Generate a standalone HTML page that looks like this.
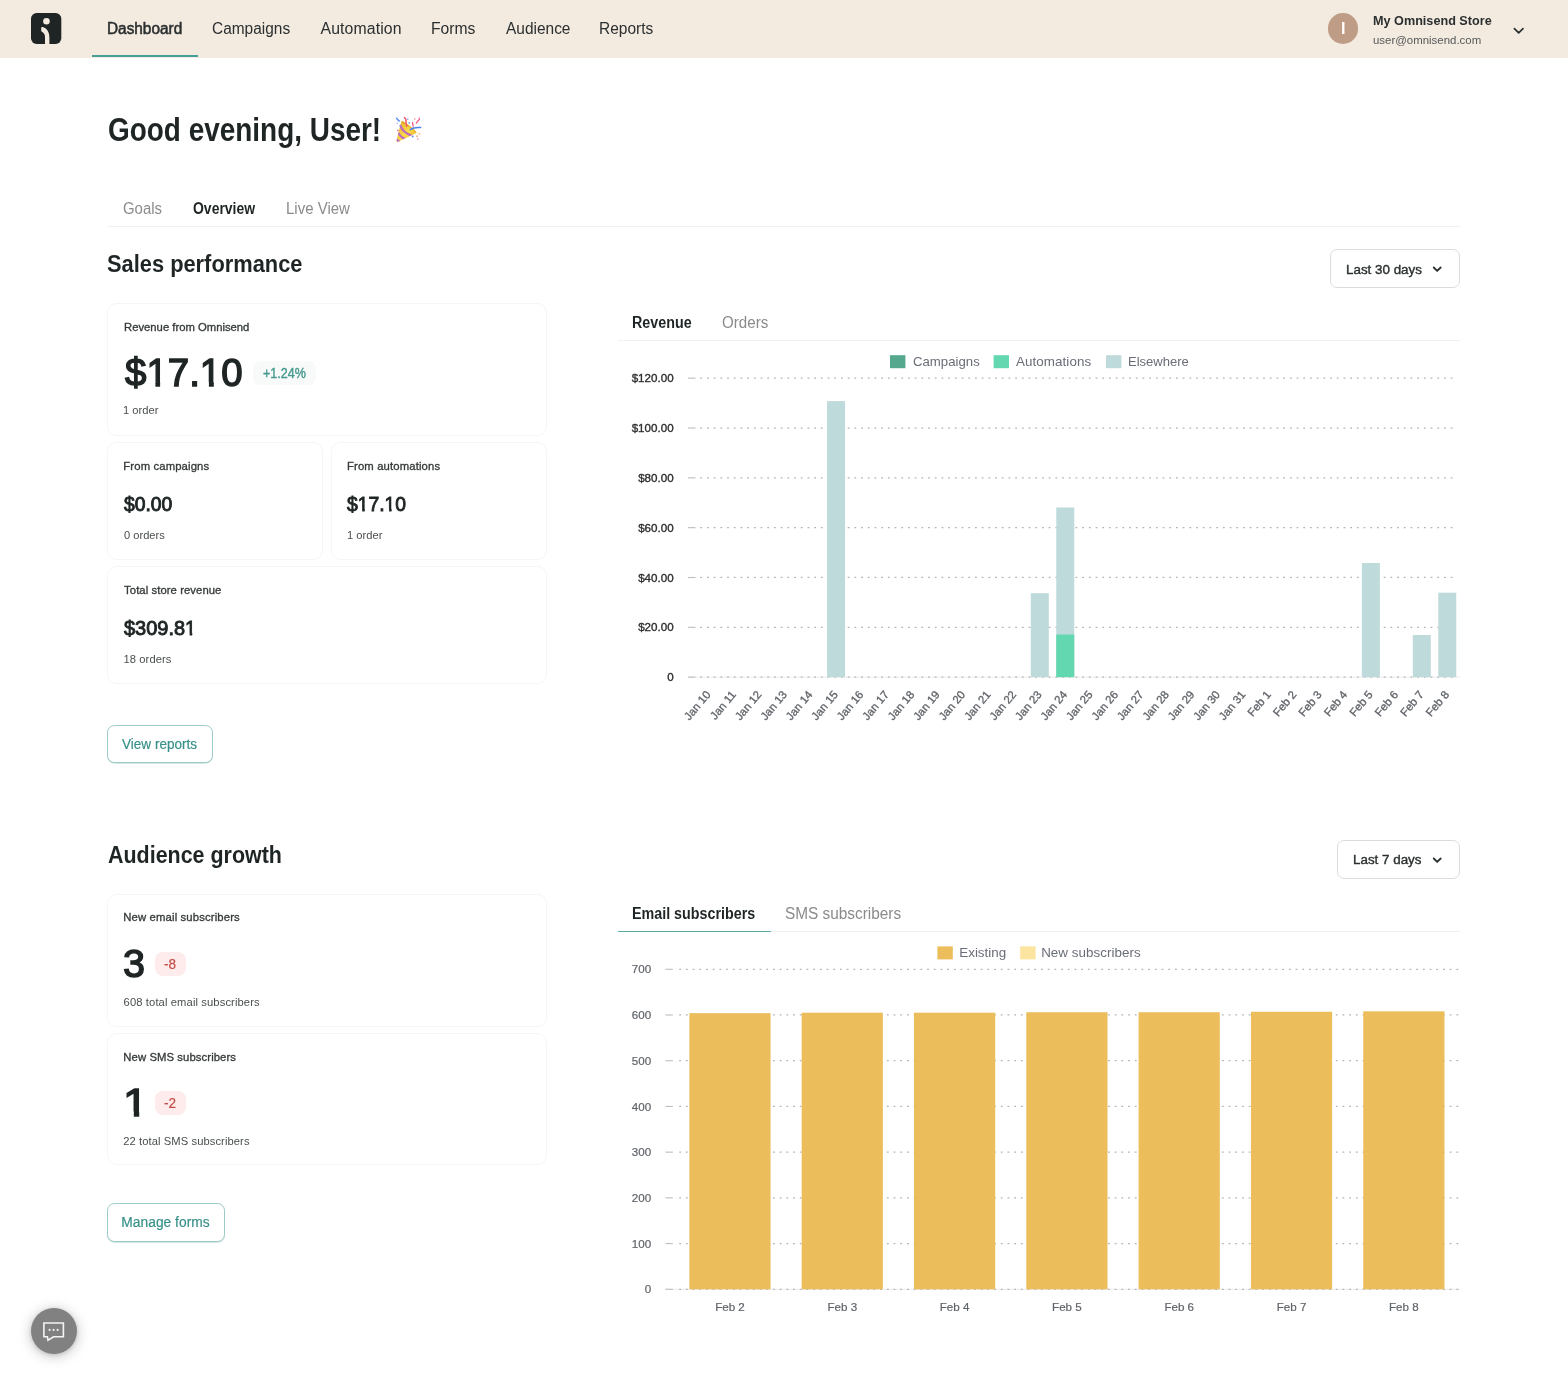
<!DOCTYPE html>
<html lang="en"><head><meta charset="utf-8"><title>Dashboard - Omnisend</title>
<style>
html,body{margin:0;padding:0;background:#fff;}
body{width:1568px;height:1377px;position:relative;overflow:hidden;font-family:"Liberation Sans",sans-serif;}
#app{position:absolute;left:0;top:0;width:1568px;height:1377px;will-change:transform;}
.abs{position:absolute;}
.t{position:absolute;white-space:nowrap;font-family:"Liberation Sans",sans-serif;transform-origin:0 50%;}
svg text{font-family:"Liberation Sans",sans-serif;}
.nav{position:absolute;left:0;top:0;width:1568px;height:57.5px;background:#f3eae0;}
.card{position:absolute;box-sizing:border-box;border:1.6px solid #f5f5f5;border-radius:9.5px;background:#fff;}
.btn{position:absolute;box-sizing:border-box;border:1.3px solid #9ccbc7;border-radius:7.5px;background:#fff;box-shadow:0 .8px 0 rgba(60,140,135,.28);}
.dd{position:absolute;box-sizing:border-box;border:1px solid #dcdcdc;border-radius:7px;background:#fff;}
.o{display:inline-block;clip-path:polygon(0 0,.362em 0,.362em 100%,.236em 100%,.236em .742em,0 .742em);}
.hr{position:absolute;height:1px;background:#f0f0f0;}
.badge{position:absolute;border-radius:8px;}
</style></head><body><div id="app">
<div class="nav"></div>
<div class="abs" style="left:92px;top:55.3px;width:105.6px;height:2.2px;background:#469f99;"></div>
<svg class="abs" style="left:30.9px;top:13.4px" width="31" height="32" viewBox="0 0 31 32">
<rect x="0" y="0" width="30.3" height="30.9" rx="5.6" ry="5.6" fill="#1f2525"/>
<circle cx="15.45" cy="8.25" r="3.3" fill="#f3eae0"/>
<path d="M10.2 14.7 C10.2 14.0 10.8 13.8 11.5 14.0 C15.7 15.3 18.4 18.6 18.4 24.5 L18.4 31 L14.0 31 L14.0 24.5 C14.0 21.6 13.1 20.1 11.3 19.0 C10.5 18.5 10.2 18.1 10.2 17.2 Z" fill="#f3eae0"/>
</svg>
<div class="abs" style="left:1327.5px;top:13.4px;width:30.9px;height:30.9px;border-radius:50%;background:#bf9c85;"></div>
<svg class="abs" style="left:1510px;top:24px" width="18" height="14" viewBox="0 0 18 14"><path d="M4.4 4.6 L8.7 8.9 L13 4.6" fill="none" stroke="#2a2f2f" stroke-width="1.7" stroke-linecap="round" stroke-linejoin="round"/></svg>
<svg class="abs" style="left:388px;top:110px" width="40" height="40" viewBox="0 0 40 40">
<defs><linearGradient id="cg" x1="0" y1="0" x2="1" y2="1"><stop offset="0" stop-color="#e3a92c"/><stop offset=".55" stop-color="#fbdc45"/><stop offset="1" stop-color="#e8a625"/></linearGradient>
<clipPath id="cc"><path d="M8.6 31.6 C8.2 30.8 11.6 17.6 13.2 12.2 C13.5 11.2 14.4 11 15.4 11.6 C20 14.4 25.4 18.6 27.8 21.6 C28.4 22.4 28.2 23 27.4 23.4 C22 26 10.4 31.6 9.6 31.9 C9.1 32.1 8.8 32 8.6 31.6 Z"/></clipPath></defs>
<path d="M8.6 31.6 C8.2 30.8 11.6 17.6 13.2 12.2 C13.5 11.2 14.4 11 15.4 11.6 C20 14.4 25.4 18.6 27.8 21.6 C28.4 22.4 28.2 23 27.4 23.4 C22 26 10.4 31.6 9.6 31.9 C9.1 32.1 8.8 32 8.6 31.6 Z" fill="url(#cg)"/>
<g clip-path="url(#cc)" fill="none" stroke="#b862cf" stroke-width="2.3" opacity=".92">
<path d="M12 14.5 C13.5 19.5 17.5 23.5 23.5 25.5"/>
<path d="M10 22.5 C11.5 25.5 14 27.8 17.5 29"/>
<path d="M8 28.5 C9 30.2 10.4 31.2 12 31.8"/>
</g>
<path d="M13.6 11.8 C17 12.6 25.6 19 27.6 22.4" fill="none" stroke="#d99a22" stroke-width="1.2" opacity=".7"/>
<path d="M22.3 19.6 C24.6 17.8 28.6 17.2 32.6 17.5" fill="none" stroke="#4b83f3" stroke-width="1.5" stroke-linecap="round"/>
<path d="M16.4 7.6 C18.2 8.4 18.2 10.2 18 12 C17.9 13.6 18.4 15 18.8 16.2" fill="none" stroke="#f05a6e" stroke-width="1.5" stroke-linecap="round"/>
<path d="M24.6 12.6 C24 13.8 25.4 14.8 25.2 16.2" fill="none" stroke="#f45d8d" stroke-width="1.4" stroke-linecap="round"/>
<path d="M31.4 8.2 C32 9.6 30.2 10.2 29.6 11.4 C29.2 12.2 28.8 12.6 28.4 13.2" fill="none" stroke="#f2688f" stroke-width="1.4" stroke-linecap="round"/>
<path d="M8.8 8.4 C9 9.6 10.4 9.8 11.2 11" fill="none" stroke="#5b8df5" stroke-width="1.6" stroke-linecap="round"/>
<circle cx="26.8" cy="9" r=".8" fill="#f27a9c"/>
<circle cx="21.2" cy="12.8" r=".9" fill="#6c9cf7"/><circle cx="19.8" cy="9.2" r=".7" fill="#6c9cf7"/>
<circle cx="9.2" cy="13.2" r=".8" fill="#9db9fa"/><circle cx="11.8" cy="16" r=".7" fill="#7d97e8"/>
<circle cx="9.9" cy="20.3" r=".9" fill="#f0708d"/>
<circle cx="24.7" cy="26.5" r=".95" fill="#5b8df5"/>
<circle cx="31.4" cy="23.8" r=".9" fill="#f6b07a"/><circle cx="29.1" cy="26.2" r=".9" fill="#f4a66a"/>
<circle cx="29.9" cy="29.1" r=".85" fill="#f59ac0"/>
<circle cx="13" cy="11" r=".6" fill="#f8e25c"/><circle cx="29" cy="22.4" r=".6" fill="#f8e25c"/>
</svg>
<div class="hr" style="left:107.5px;top:226px;width:1352.5px;"></div>
<div class="card" style="left:107.1px;top:303.2px;width:440px;height:132.7px;"></div>
<div class="card" style="left:107.1px;top:442.2px;width:216px;height:117.4px;"></div>
<div class="card" style="left:331.1px;top:442.2px;width:216px;height:117.4px;"></div>
<div class="card" style="left:107.1px;top:566.2px;width:440px;height:117.4px;"></div>
<div class="badge" style="left:252.8px;top:361.3px;width:63px;height:23.5px;background:#f8f9f9;"></div>
<div class="btn" style="left:107.2px;top:724.7px;width:105.9px;height:38.6px;"></div>
<div class="dd" style="left:1329.8px;top:249.3px;width:130.6px;height:38.3px;"></div>
<svg class="abs" style="left:1430px;top:263px" width="14" height="12" viewBox="0 0 14 12"><path d="M3.75 4.5 L7.2 7.95 L10.65 4.5" fill="none" stroke="#2a2f2f" stroke-width="1.8" stroke-linecap="round" stroke-linejoin="round"/></svg>
<div class="hr" style="left:617.5px;top:340px;width:842.5px;"></div>
<svg class="abs" style="left:0;top:340px" width="1568" height="440" viewBox="0 340 1568 440">
<line x1="688" x2="1460.0" y1="677.15" y2="677.15" stroke="#ececec" stroke-width="1"/>
<line x1="688" x2="695.5" y1="677.15" y2="677.15" stroke="#bdbdbd" stroke-width="1.1"/>
<line x1="700.3" x2="1456.6" y1="677.15" y2="677.15" stroke="#b4b4b4" stroke-width="1.25" stroke-dasharray="1.8 4.9"/>
<text x="673.6" y="681.25" text-anchor="end" font-size="11.6" fill="#2e2e2e" stroke="#2e2e2e" stroke-width="0.35">0</text>
<line x1="688" x2="695.5" y1="627.32" y2="627.32" stroke="#bdbdbd" stroke-width="1.1"/>
<line x1="700.3" x2="1456.6" y1="627.32" y2="627.32" stroke="#b4b4b4" stroke-width="1.25" stroke-dasharray="1.8 4.9"/>
<text x="673.6" y="631.42" text-anchor="end" font-size="11.6" fill="#2e2e2e" stroke="#2e2e2e" stroke-width="0.35">$20.00</text>
<line x1="688" x2="695.5" y1="577.49" y2="577.49" stroke="#bdbdbd" stroke-width="1.1"/>
<line x1="700.3" x2="1456.6" y1="577.49" y2="577.49" stroke="#b4b4b4" stroke-width="1.25" stroke-dasharray="1.8 4.9"/>
<text x="673.6" y="581.59" text-anchor="end" font-size="11.6" fill="#2e2e2e" stroke="#2e2e2e" stroke-width="0.35">$40.00</text>
<line x1="688" x2="695.5" y1="527.66" y2="527.66" stroke="#bdbdbd" stroke-width="1.1"/>
<line x1="700.3" x2="1456.6" y1="527.66" y2="527.66" stroke="#b4b4b4" stroke-width="1.25" stroke-dasharray="1.8 4.9"/>
<text x="673.6" y="531.76" text-anchor="end" font-size="11.6" fill="#2e2e2e" stroke="#2e2e2e" stroke-width="0.35">$60.00</text>
<line x1="688" x2="695.5" y1="477.83" y2="477.83" stroke="#bdbdbd" stroke-width="1.1"/>
<line x1="700.3" x2="1456.6" y1="477.83" y2="477.83" stroke="#b4b4b4" stroke-width="1.25" stroke-dasharray="1.8 4.9"/>
<text x="673.6" y="481.93" text-anchor="end" font-size="11.6" fill="#2e2e2e" stroke="#2e2e2e" stroke-width="0.35">$80.00</text>
<line x1="688" x2="695.5" y1="428.00" y2="428.00" stroke="#bdbdbd" stroke-width="1.1"/>
<line x1="700.3" x2="1456.6" y1="428.00" y2="428.00" stroke="#b4b4b4" stroke-width="1.25" stroke-dasharray="1.8 4.9"/>
<text x="673.6" y="432.10" text-anchor="end" font-size="11.6" fill="#2e2e2e" stroke="#2e2e2e" stroke-width="0.35">$100.00</text>
<line x1="688" x2="695.5" y1="378.17" y2="378.17" stroke="#bdbdbd" stroke-width="1.1"/>
<line x1="700.3" x2="1456.6" y1="378.17" y2="378.17" stroke="#b4b4b4" stroke-width="1.25" stroke-dasharray="1.8 4.9"/>
<text x="673.6" y="382.27" text-anchor="end" font-size="11.6" fill="#2e2e2e" stroke="#2e2e2e" stroke-width="0.35">$120.00</text>
<rect x="827.07" y="401.09" width="18.0" height="276.06" fill="#bfdada"/>
<rect x="1030.80" y="593.19" width="18.0" height="83.96" fill="#bfdada"/>
<rect x="1056.27" y="507.48" width="18.0" height="169.67" fill="#bfdada"/>
<rect x="1056.27" y="634.55" width="18.0" height="42.60" fill="#62d7b0"/>
<rect x="1361.87" y="563.04" width="18.0" height="114.11" fill="#bfdada"/>
<rect x="1412.80" y="635.04" width="18.0" height="42.11" fill="#bfdada"/>
<rect x="1438.27" y="592.69" width="18.0" height="84.46" fill="#bfdada"/>
<text transform="translate(711.23 694.85) rotate(-50)" text-anchor="end" font-size="11.4" fill="#5f6368" stroke="#5f6368" stroke-width="0.3">Jan 10</text>
<text transform="translate(736.70 694.85) rotate(-50)" text-anchor="end" font-size="11.4" fill="#5f6368" stroke="#5f6368" stroke-width="0.3">Jan 11</text>
<text transform="translate(762.17 694.85) rotate(-50)" text-anchor="end" font-size="11.4" fill="#5f6368" stroke="#5f6368" stroke-width="0.3">Jan 12</text>
<text transform="translate(787.63 694.85) rotate(-50)" text-anchor="end" font-size="11.4" fill="#5f6368" stroke="#5f6368" stroke-width="0.3">Jan 13</text>
<text transform="translate(813.10 694.85) rotate(-50)" text-anchor="end" font-size="11.4" fill="#5f6368" stroke="#5f6368" stroke-width="0.3">Jan 14</text>
<text transform="translate(838.57 694.85) rotate(-50)" text-anchor="end" font-size="11.4" fill="#5f6368" stroke="#5f6368" stroke-width="0.3">Jan 15</text>
<text transform="translate(864.03 694.85) rotate(-50)" text-anchor="end" font-size="11.4" fill="#5f6368" stroke="#5f6368" stroke-width="0.3">Jan 16</text>
<text transform="translate(889.50 694.85) rotate(-50)" text-anchor="end" font-size="11.4" fill="#5f6368" stroke="#5f6368" stroke-width="0.3">Jan 17</text>
<text transform="translate(914.97 694.85) rotate(-50)" text-anchor="end" font-size="11.4" fill="#5f6368" stroke="#5f6368" stroke-width="0.3">Jan 18</text>
<text transform="translate(940.43 694.85) rotate(-50)" text-anchor="end" font-size="11.4" fill="#5f6368" stroke="#5f6368" stroke-width="0.3">Jan 19</text>
<text transform="translate(965.90 694.85) rotate(-50)" text-anchor="end" font-size="11.4" fill="#5f6368" stroke="#5f6368" stroke-width="0.3">Jan 20</text>
<text transform="translate(991.37 694.85) rotate(-50)" text-anchor="end" font-size="11.4" fill="#5f6368" stroke="#5f6368" stroke-width="0.3">Jan 21</text>
<text transform="translate(1016.83 694.85) rotate(-50)" text-anchor="end" font-size="11.4" fill="#5f6368" stroke="#5f6368" stroke-width="0.3">Jan 22</text>
<text transform="translate(1042.30 694.85) rotate(-50)" text-anchor="end" font-size="11.4" fill="#5f6368" stroke="#5f6368" stroke-width="0.3">Jan 23</text>
<text transform="translate(1067.77 694.85) rotate(-50)" text-anchor="end" font-size="11.4" fill="#5f6368" stroke="#5f6368" stroke-width="0.3">Jan 24</text>
<text transform="translate(1093.23 694.85) rotate(-50)" text-anchor="end" font-size="11.4" fill="#5f6368" stroke="#5f6368" stroke-width="0.3">Jan 25</text>
<text transform="translate(1118.70 694.85) rotate(-50)" text-anchor="end" font-size="11.4" fill="#5f6368" stroke="#5f6368" stroke-width="0.3">Jan 26</text>
<text transform="translate(1144.17 694.85) rotate(-50)" text-anchor="end" font-size="11.4" fill="#5f6368" stroke="#5f6368" stroke-width="0.3">Jan 27</text>
<text transform="translate(1169.63 694.85) rotate(-50)" text-anchor="end" font-size="11.4" fill="#5f6368" stroke="#5f6368" stroke-width="0.3">Jan 28</text>
<text transform="translate(1195.10 694.85) rotate(-50)" text-anchor="end" font-size="11.4" fill="#5f6368" stroke="#5f6368" stroke-width="0.3">Jan 29</text>
<text transform="translate(1220.57 694.85) rotate(-50)" text-anchor="end" font-size="11.4" fill="#5f6368" stroke="#5f6368" stroke-width="0.3">Jan 30</text>
<text transform="translate(1246.03 694.85) rotate(-50)" text-anchor="end" font-size="11.4" fill="#5f6368" stroke="#5f6368" stroke-width="0.3">Jan 31</text>
<text transform="translate(1271.50 694.85) rotate(-50)" text-anchor="end" font-size="11.4" fill="#5f6368" stroke="#5f6368" stroke-width="0.3">Feb 1</text>
<text transform="translate(1296.97 694.85) rotate(-50)" text-anchor="end" font-size="11.4" fill="#5f6368" stroke="#5f6368" stroke-width="0.3">Feb 2</text>
<text transform="translate(1322.43 694.85) rotate(-50)" text-anchor="end" font-size="11.4" fill="#5f6368" stroke="#5f6368" stroke-width="0.3">Feb 3</text>
<text transform="translate(1347.90 694.85) rotate(-50)" text-anchor="end" font-size="11.4" fill="#5f6368" stroke="#5f6368" stroke-width="0.3">Feb 4</text>
<text transform="translate(1373.37 694.85) rotate(-50)" text-anchor="end" font-size="11.4" fill="#5f6368" stroke="#5f6368" stroke-width="0.3">Feb 5</text>
<text transform="translate(1398.83 694.85) rotate(-50)" text-anchor="end" font-size="11.4" fill="#5f6368" stroke="#5f6368" stroke-width="0.3">Feb 6</text>
<text transform="translate(1424.30 694.85) rotate(-50)" text-anchor="end" font-size="11.4" fill="#5f6368" stroke="#5f6368" stroke-width="0.3">Feb 7</text>
<text transform="translate(1449.77 694.85) rotate(-50)" text-anchor="end" font-size="11.4" fill="#5f6368" stroke="#5f6368" stroke-width="0.3">Feb 8</text>
<rect x="890" y="355.2" width="15.4" height="13" fill="#55a88d"/>
<rect x="993.6" y="355.2" width="15.4" height="13" fill="#62d7b0"/>
<rect x="1106" y="355.2" width="15.4" height="13" fill="#bfdada"/>
</svg>
<div class="card" style="left:107.1px;top:893.7px;width:440px;height:132.9px;"></div>
<div class="card" style="left:107.1px;top:1032.5px;width:440px;height:132.7px;"></div>
<div class="badge" style="left:154.6px;top:952.2px;width:31px;height:23.8px;background:#feecec;"></div>
<div class="badge" style="left:154.6px;top:1091.4px;width:31px;height:23.8px;background:#feecec;"></div>
<div class="btn" style="left:107.2px;top:1203.1px;width:117.6px;height:38.6px;"></div>
<div class="dd" style="left:1337.4px;top:840.2px;width:123px;height:38.5px;"></div>
<svg class="abs" style="left:1430px;top:853.7px" width="14" height="12" viewBox="0 0 14 12"><path d="M3.75 4.5 L7.2 7.95 L10.65 4.5" fill="none" stroke="#2a2f2f" stroke-width="1.8" stroke-linecap="round" stroke-linejoin="round"/></svg>
<div class="hr" style="left:617.5px;top:931px;width:842.5px;"></div>
<div class="abs" style="left:617.5px;top:930.5px;width:153px;height:1.6px;background:#5aaaa5;"></div>
<svg class="abs" style="left:0;top:932px" width="1568" height="440" viewBox="0 932 1568 440">
<line x1="665.4" x2="1460.0" y1="1289.30" y2="1289.30" stroke="#ececec" stroke-width="1"/>
<line x1="665.4" x2="672.8" y1="1289.30" y2="1289.30" stroke="#bdbdbd" stroke-width="1.1"/>
<line x1="679.2" x2="1459.6" y1="1289.30" y2="1289.30" stroke="#b4b4b4" stroke-width="1.25" stroke-dasharray="1.8 4.9"/>
<text x="651.2" y="1293.40" text-anchor="end" font-size="11.6" fill="#5f6368" stroke="#5f6368" stroke-width="0.2">0</text>
<line x1="665.4" x2="672.8" y1="1243.58" y2="1243.58" stroke="#bdbdbd" stroke-width="1.1"/>
<line x1="679.2" x2="1459.6" y1="1243.58" y2="1243.58" stroke="#b4b4b4" stroke-width="1.25" stroke-dasharray="1.8 4.9"/>
<text x="651.2" y="1247.68" text-anchor="end" font-size="11.6" fill="#5f6368" stroke="#5f6368" stroke-width="0.2">100</text>
<line x1="665.4" x2="672.8" y1="1197.86" y2="1197.86" stroke="#bdbdbd" stroke-width="1.1"/>
<line x1="679.2" x2="1459.6" y1="1197.86" y2="1197.86" stroke="#b4b4b4" stroke-width="1.25" stroke-dasharray="1.8 4.9"/>
<text x="651.2" y="1201.96" text-anchor="end" font-size="11.6" fill="#5f6368" stroke="#5f6368" stroke-width="0.2">200</text>
<line x1="665.4" x2="672.8" y1="1152.14" y2="1152.14" stroke="#bdbdbd" stroke-width="1.1"/>
<line x1="679.2" x2="1459.6" y1="1152.14" y2="1152.14" stroke="#b4b4b4" stroke-width="1.25" stroke-dasharray="1.8 4.9"/>
<text x="651.2" y="1156.24" text-anchor="end" font-size="11.6" fill="#5f6368" stroke="#5f6368" stroke-width="0.2">300</text>
<line x1="665.4" x2="672.8" y1="1106.42" y2="1106.42" stroke="#bdbdbd" stroke-width="1.1"/>
<line x1="679.2" x2="1459.6" y1="1106.42" y2="1106.42" stroke="#b4b4b4" stroke-width="1.25" stroke-dasharray="1.8 4.9"/>
<text x="651.2" y="1110.52" text-anchor="end" font-size="11.6" fill="#5f6368" stroke="#5f6368" stroke-width="0.2">400</text>
<line x1="665.4" x2="672.8" y1="1060.70" y2="1060.70" stroke="#bdbdbd" stroke-width="1.1"/>
<line x1="679.2" x2="1459.6" y1="1060.70" y2="1060.70" stroke="#b4b4b4" stroke-width="1.25" stroke-dasharray="1.8 4.9"/>
<text x="651.2" y="1064.80" text-anchor="end" font-size="11.6" fill="#5f6368" stroke="#5f6368" stroke-width="0.2">500</text>
<line x1="665.4" x2="672.8" y1="1014.98" y2="1014.98" stroke="#bdbdbd" stroke-width="1.1"/>
<line x1="679.2" x2="1459.6" y1="1014.98" y2="1014.98" stroke="#b4b4b4" stroke-width="1.25" stroke-dasharray="1.8 4.9"/>
<text x="651.2" y="1019.08" text-anchor="end" font-size="11.6" fill="#5f6368" stroke="#5f6368" stroke-width="0.2">600</text>
<line x1="665.4" x2="672.8" y1="969.26" y2="969.26" stroke="#bdbdbd" stroke-width="1.1"/>
<line x1="679.2" x2="1459.6" y1="969.26" y2="969.26" stroke="#b4b4b4" stroke-width="1.25" stroke-dasharray="1.8 4.9"/>
<text x="651.2" y="973.36" text-anchor="end" font-size="11.6" fill="#5f6368" stroke="#5f6368" stroke-width="0.2">700</text>
<rect x="689.36" y="1013.15" width="81.2" height="276.15" fill="#ebbd5b"/>
<text x="729.96" y="1311.30" text-anchor="middle" font-size="11.6" fill="#5f6368" stroke="#5f6368" stroke-width="0.2">Feb 2</text>
<rect x="801.67" y="1012.69" width="81.2" height="276.61" fill="#ebbd5b"/>
<text x="842.27" y="1311.30" text-anchor="middle" font-size="11.6" fill="#5f6368" stroke="#5f6368" stroke-width="0.2">Feb 3</text>
<rect x="913.99" y="1012.69" width="81.2" height="276.61" fill="#ebbd5b"/>
<text x="954.59" y="1311.30" text-anchor="middle" font-size="11.6" fill="#5f6368" stroke="#5f6368" stroke-width="0.2">Feb 4</text>
<rect x="1026.30" y="1012.24" width="81.2" height="277.06" fill="#ebbd5b"/>
<text x="1066.90" y="1311.30" text-anchor="middle" font-size="11.6" fill="#5f6368" stroke="#5f6368" stroke-width="0.2">Feb 5</text>
<rect x="1138.61" y="1012.24" width="81.2" height="277.06" fill="#ebbd5b"/>
<text x="1179.21" y="1311.30" text-anchor="middle" font-size="11.6" fill="#5f6368" stroke="#5f6368" stroke-width="0.2">Feb 6</text>
<rect x="1250.93" y="1011.78" width="81.2" height="277.52" fill="#ebbd5b"/>
<text x="1291.53" y="1311.30" text-anchor="middle" font-size="11.6" fill="#5f6368" stroke="#5f6368" stroke-width="0.2">Feb 7</text>
<rect x="1363.24" y="1011.32" width="81.2" height="277.98" fill="#ebbd5b"/>
<text x="1403.84" y="1311.30" text-anchor="middle" font-size="11.6" fill="#5f6368" stroke="#5f6368" stroke-width="0.2">Feb 8</text>
<rect x="937.4" y="946.4" width="15.4" height="13" fill="#ebbd5b"/>
<rect x="1020.2" y="946.4" width="15.4" height="13" fill="#fbe3a0"/>
</svg>
<div class="abs" style="left:31px;top:1308px;width:46px;height:46px;border-radius:50%;background:#818181;box-shadow:0 2px 14px rgba(0,0,0,.24),0 1px 4px rgba(0,0,0,.14);"></div>
<svg class="abs" style="left:40px;top:1319px" width="28" height="26" viewBox="0 0 28 26">
<path d="M3.9 4 H23.4 V17.7 H13.6 L8 21.2 L7.4 17.7 H3.9 Z" fill="none" stroke="#f4f4f4" stroke-width="1.6" stroke-linejoin="miter"/>
<circle cx="9.6" cy="10.9" r="1.05" fill="#f4f4f4"/><circle cx="13.6" cy="10.9" r="1.05" fill="#f4f4f4"/><circle cx="17.6" cy="10.9" r="1.05" fill="#f4f4f4"/>
</svg>
<span class="t" id="nav1" style="left:106.97px;top:20.63px;font-size:15.8px;line-height:15.8px;color:#2a2f2f;transform:scaleX(0.9728);-webkit-text-stroke:0.54px #2a2f2f;">Dashboard</span>
<span class="t" id="nav2" style="left:212.06px;top:20.63px;font-size:15.8px;line-height:15.8px;color:#2a2f2f;transform:scaleX(0.9775);">Campaigns</span>
<span class="t" id="nav3" style="left:320.47px;top:20.63px;font-size:15.8px;line-height:15.8px;color:#2a2f2f;letter-spacing:0.120px;">Automation</span>
<span class="t" id="nav4" style="left:431.02px;top:20.63px;font-size:15.8px;line-height:15.8px;color:#2a2f2f;transform:scaleX(0.9936);">Forms</span>
<span class="t" id="nav5" style="left:505.72px;top:20.63px;font-size:15.8px;line-height:15.8px;color:#2a2f2f;transform:scaleX(0.9785);">Audience</span>
<span class="t" id="nav6" style="left:599.30px;top:20.63px;font-size:15.8px;line-height:15.8px;color:#2a2f2f;transform:scaleX(0.9793);">Reports</span>
<span class="t" id="store" style="left:1373.08px;top:14.00px;font-size:13px;line-height:13px;color:#2a2f2f;transform:scaleX(0.9720);font-weight:700;">My Omnisend Store</span>
<span class="t" id="email" style="left:1373.27px;top:35.27px;font-size:11.5px;line-height:11.5px;color:#555a5a;transform:scaleX(0.9940);">user@omnisend.com</span>
<span class="t" id="avI" style="left:1340.88px;top:20.63px;font-size:15.8px;line-height:15.8px;color:#fffdfb;transform:scaleX(1.0174);font-weight:700;">I</span>
<span class="t" id="h1" style="left:107.81px;top:114.49px;font-size:32.5px;line-height:32.5px;color:#1f2525;transform:scaleX(0.8594);font-weight:700;">Good evening, User!</span>
<span class="t" id="tab1" style="left:122.59px;top:200.63px;font-size:15.8px;line-height:15.8px;color:#8b8b8b;transform:scaleX(0.9455);">Goals</span>
<span class="t" id="tab2" style="left:193.00px;top:200.63px;font-size:15.8px;line-height:15.8px;color:#1f2525;transform:scaleX(0.8841);font-weight:700;">Overview</span>
<span class="t" id="tab3" style="left:286.27px;top:200.63px;font-size:15.8px;line-height:15.8px;color:#8b8b8b;transform:scaleX(0.9489);">Live View</span>
<span class="t" id="h2a" style="left:107.48px;top:252.53px;font-size:23px;line-height:23px;color:#1f2525;transform:scaleX(0.9495);font-weight:700;">Sales performance</span>
<span class="t" id="dd1" style="left:1345.74px;top:263.40px;font-size:13.7px;line-height:13.7px;color:#2a2f2f;transform:scaleX(0.9787);-webkit-text-stroke:0.38px #2a2f2f;">Last 30 days</span>
<span class="t" id="c1l" style="left:123.68px;top:322.43px;font-size:11.3px;line-height:11.3px;color:#363a3a;transform:scaleX(0.9984);-webkit-text-stroke:0.32px #363a3a;">Revenue from Omnisend</span>
<span class="t" id="c1v" style="left:124.56px;top:352.82px;font-size:39.2px;line-height:39.2px;color:#1f2525;transform:scaleX(0.9811);-webkit-text-stroke:1.45px #1f2525;">$<span class="o">1</span>7.<span class="o">1</span>0</span>
<span class="t" id="c1b" style="left:262.66px;top:367.00px;font-size:13.9px;line-height:13.9px;color:#46998f;transform:scaleX(0.9018);-webkit-text-stroke:0.39px #46998f;">+1.24%</span>
<span class="t" id="c1s" style="left:123.35px;top:404.52px;font-size:11.2px;line-height:11.2px;color:#4a4e4e;transform:scaleX(0.9980);">1 order</span>
<span class="t" id="c2l" style="left:123.32px;top:461.43px;font-size:11.3px;line-height:11.3px;color:#363a3a;letter-spacing:0.131px;-webkit-text-stroke:0.32px #363a3a;">From campaigns</span>
<span class="t" id="c2v" style="left:123.86px;top:494.07px;font-size:20px;line-height:20px;color:#1f2525;transform:scaleX(0.9661);-webkit-text-stroke:0.92px #1f2525;">$0.00</span>
<span class="t" id="c2s" style="left:123.62px;top:529.52px;font-size:11.2px;line-height:11.2px;color:#4a4e4e;transform:scaleX(0.9941);">0 orders</span>
<span class="t" id="c3l" style="left:347.00px;top:461.43px;font-size:11.3px;line-height:11.3px;color:#363a3a;letter-spacing:0.138px;-webkit-text-stroke:0.32px #363a3a;">From automations</span>
<span class="t" id="c3v" style="left:347.04px;top:494.07px;font-size:20px;line-height:20px;color:#1f2525;transform:scaleX(0.9644);-webkit-text-stroke:0.92px #1f2525;">$<span class="o">1</span>7.<span class="o">1</span>0</span>
<span class="t" id="c3s" style="left:346.74px;top:529.52px;font-size:11.2px;line-height:11.2px;color:#4a4e4e;transform:scaleX(0.9991);">1 order</span>
<span class="t" id="c4l" style="left:124.10px;top:585.43px;font-size:11.3px;line-height:11.3px;color:#363a3a;letter-spacing:0.068px;-webkit-text-stroke:0.32px #363a3a;">Total store revenue</span>
<span class="t" id="c4v" style="left:124.08px;top:618.07px;font-size:20px;line-height:20px;color:#1f2525;transform:scaleX(0.9976);-webkit-text-stroke:0.92px #1f2525;">$309.8<span class="o">1</span></span>
<span class="t" id="c4s" style="left:123.45px;top:653.52px;font-size:11.2px;line-height:11.2px;color:#4a4e4e;letter-spacing:0.096px;">18 orders</span>
<span class="t" id="btn1" style="left:122.29px;top:738.40px;font-size:13.8px;line-height:13.8px;color:#379089;transform:scaleX(0.9819);-webkit-text-stroke:0.19px #379089;">View reports</span>
<span class="t" id="ct1" style="left:632.06px;top:314.63px;font-size:15.8px;line-height:15.8px;color:#1f2525;transform:scaleX(0.9053);font-weight:700;">Revenue</span>
<span class="t" id="ct2" style="left:721.74px;top:314.63px;font-size:15.8px;line-height:15.8px;color:#8b8b8b;transform:scaleX(0.9576);">Orders</span>
<span class="t" id="lg1" style="left:912.86px;top:354.66px;font-size:13.4px;line-height:13.4px;color:#696d77;transform:scaleX(0.9855);">Campaigns</span>
<span class="t" id="lg2" style="left:1015.98px;top:354.66px;font-size:13.4px;line-height:13.4px;color:#696d77;letter-spacing:0.071px;">Automations</span>
<span class="t" id="lg3" style="left:1127.71px;top:354.66px;font-size:13.4px;line-height:13.4px;color:#696d77;transform:scaleX(0.9732);">Elsewhere</span>
<span class="t" id="h2b" style="left:108.00px;top:843.53px;font-size:23px;line-height:23px;color:#1f2525;transform:scaleX(0.9321);font-weight:700;">Audience growth</span>
<span class="t" id="dd2" style="left:1352.99px;top:853.40px;font-size:13.7px;line-height:13.7px;color:#2a2f2f;transform:scaleX(0.9787);-webkit-text-stroke:0.38px #2a2f2f;">Last 7 days</span>
<span class="t" id="a1l" style="left:123.32px;top:912.43px;font-size:11.3px;line-height:11.3px;color:#363a3a;letter-spacing:0.138px;-webkit-text-stroke:0.32px #363a3a;">New email subscribers</span>
<span class="t" id="a1v" style="left:123.09px;top:943.82px;font-size:39.2px;line-height:39.2px;color:#1f2525;transform:scaleX(1.0098);-webkit-text-stroke:1.45px #1f2525;">3</span>
<span class="t" id="a1b" style="left:163.80px;top:958.00px;font-size:13.9px;line-height:13.9px;color:#c44a45;transform:scaleX(0.9718);-webkit-text-stroke:0.19px #c44a45;">-8</span>
<span class="t" id="a1s" style="left:123.62px;top:996.52px;font-size:11.2px;line-height:11.2px;color:#4a4e4e;letter-spacing:0.114px;">608 total email subscribers</span>
<span class="t" id="a2l" style="left:123.32px;top:1052.43px;font-size:11.3px;line-height:11.3px;color:#363a3a;letter-spacing:0.085px;-webkit-text-stroke:0.32px #363a3a;">New SMS subscribers</span>
<span class="t" id="a2v" style="clip-path:polygon(0 0,14.1px 0,14.1px 100%,9.4px 100%,9.4px 28.8px,0 28.8px);left:122.70px;top:1082.82px;font-size:39.2px;line-height:39.2px;color:#1f2525;transform:scaleX(1.1500);-webkit-text-stroke:1.45px #1f2525;">1</span>
<span class="t" id="a2b" style="left:163.80px;top:1097.00px;font-size:13.9px;line-height:13.9px;color:#c44a45;transform:scaleX(0.9761);-webkit-text-stroke:0.19px #c44a45;">-2</span>
<span class="t" id="a2s" style="left:123.23px;top:1135.52px;font-size:11.2px;line-height:11.2px;color:#4a4e4e;letter-spacing:0.083px;">22 total SMS subscribers</span>
<span class="t" id="btn2" style="left:121.34px;top:1216.40px;font-size:13.8px;line-height:13.8px;color:#379089;letter-spacing:0.012px;-webkit-text-stroke:0.19px #379089;">Manage forms</span>
<span class="t" id="at1" style="left:632.05px;top:905.63px;font-size:15.8px;line-height:15.8px;color:#1f2525;transform:scaleX(0.9052);font-weight:700;">Email subscribers</span>
<span class="t" id="at2" style="left:785.33px;top:905.63px;font-size:15.8px;line-height:15.8px;color:#8b8b8b;transform:scaleX(0.9730);">SMS subscribers</span>
<span class="t" id="lg4" style="left:959.21px;top:945.66px;font-size:13.4px;line-height:13.4px;color:#696d77;letter-spacing:0.023px;">Existing</span>
<span class="t" id="lg5" style="left:1041.17px;top:945.66px;font-size:13.4px;line-height:13.4px;color:#696d77;letter-spacing:0.040px;">New subscribers</span>
</div></body></html>
